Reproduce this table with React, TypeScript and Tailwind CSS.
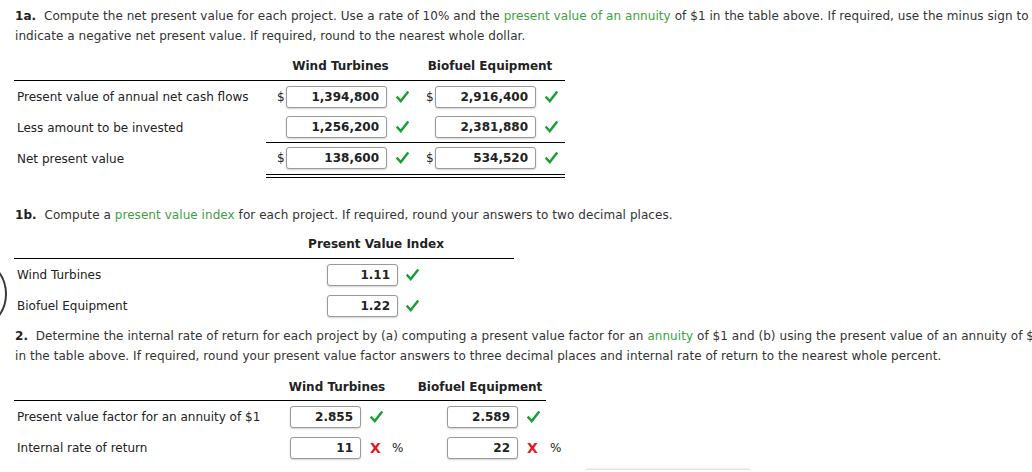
import React from "react";

const Check = () => (
  <svg width="13" height="12" viewBox="0 0 13 12" className="shrink-0">
    <path d="M1.5 6.5 L4.8 10 L11.5 1.5" fill="none" stroke="#1a9e35" strokeWidth="2.5" strokeLinecap="square" />
  </svg>
);

const Cross = () => (
  <span className="w-[12px] text-[14px] font-bold leading-none text-[#e8141b]">X</span>
);

const Box = ({ v, w }: { v: string; w: string }) => (
  <div
    className={`${w} h-[22px] shrink-0 rounded-[3px] border border-[#9a9a9a] bg-white pr-[7px] text-right text-[12px] font-bold leading-[20px] text-[#222] shadow-[0_1px_2px_rgba(0,0,0,0.18)]`}
  >
    {v}
  </div>
);

const Link = ({ children }: { children: React.ReactNode }) => (
  <span className="text-[#3f9f43]">{children}</span>
);

const MoneyCell = ({ dollar, v, w }: { dollar: boolean; v: string; w: string }) => (
  <div className={`${w} flex shrink-0 items-center`}>
    <span className="w-[20px] shrink-0 pl-[11px] text-[12px]">{dollar ? "$" : ""}</span>
    <Box v={v} w="w-[101px]" />
    <span className="ml-[9px]">
      <Check />
    </span>
  </div>
);

export default function App() {
  return (
    <div className="relative h-[472px] w-[1032px] overflow-hidden bg-white font-['DejaVu_Sans',Verdana,sans-serif] text-[12px] text-[#222]">
      {/* partial circle on the left edge */}
      <div className="absolute left-[-69px] top-[256px] h-[76px] w-[76px] rounded-full border-2 border-[#3a3a3a]" />
      {/* faint element at bottom */}
      <div className="absolute left-[585px] top-[469px] h-[10px] w-[166px] rounded-t-[3px] border-t border-[#e2e2e2] shadow-[0_-1px_2px_rgba(0,0,0,0.06)]" />

      <div className="pl-[15px] pt-[6px]">
        {/* 1a */}
        <div className="whitespace-nowrap text-[12px] leading-[20px] tracking-[0.06px] text-[#333]">
          <div>
            <b className="text-[#222]">1a.</b>&nbsp; Compute the net present value for each project. Use a rate of 10% and the{" "}
            <Link>present value of an annuity</Link> of $1 in the table above. If required, use the minus sign to
          </div>
          <div>indicate a negative net present value. If required, round to the nearest whole dollar.</div>
        </div>

        {/* table 1 */}
        <div className="ml-[-1px] mt-[6px] w-[551px]">
          <div className="flex h-[29px] items-center border-b border-black font-bold">
            <div className="w-[252px] shrink-0" />
            <div className="w-[149px] shrink-0 text-center">Wind Turbines</div>
            <div className="w-[150px] shrink-0 text-center">Biofuel Equipment</div>
          </div>
          <div className="flex h-[31px] items-center">
            <div className="w-[252px] shrink-0 pl-[3px]">Present value of annual net cash flows</div>
            <div className="flex h-full w-[299px] shrink-0 items-center">
              <MoneyCell dollar v="1,394,800" w="w-[149px]" />
              <MoneyCell dollar v="2,916,400" w="w-[150px]" />
            </div>
          </div>
          <div className="flex h-[31px] items-center">
            <div className="w-[252px] shrink-0 pl-[3px]">Less amount to be invested</div>
            <div className="flex h-full w-[299px] shrink-0 items-center border-b border-black">
              <MoneyCell dollar={false} v="1,256,200" w="w-[149px]" />
              <MoneyCell dollar={false} v="2,381,880" w="w-[150px]" />
            </div>
          </div>
          <div className="flex h-[35px] items-start">
            <div className="flex h-[31px] w-[252px] shrink-0 items-center pl-[3px]">Net present value</div>
            <div className="flex h-[35px] w-[299px] shrink-0 items-center border-b-4 border-double border-black pb-[1px]">
              <MoneyCell dollar v="138,600" w="w-[149px]" />
              <MoneyCell dollar v="534,520" w="w-[150px]" />
            </div>
          </div>
        </div>

        {/* 1b */}
        <div className="mt-[27px] whitespace-nowrap leading-[20px] tracking-[0.06px] text-[#333]">
          <b className="text-[#222]">1b.</b>&nbsp; Compute a <Link>present value index</Link> for each project. If required, round your answers to two decimal places.
        </div>
        <div className="ml-[-1px] mt-[5px] w-[500px]">
          <div className="flex h-[29px] items-center border-b border-black font-bold">
            <div className="w-[224px] shrink-0" />
            <div className="w-[276px] shrink-0 text-center">Present Value Index</div>
          </div>
          {[
            ["Wind Turbines", "1.11"],
            ["Biofuel Equipment", "1.22"],
          ].map(([l, v]) => (
            <div key={l} className="flex h-[31px] items-center">
              <div className="w-[313px] shrink-0 pl-[3px]">{l}</div>
              <Box v={v} w="w-[71px]" />
              <span className="ml-[8px]">
                <Check />
              </span>
            </div>
          ))}
        </div>

        {/* 2 */}
        <div className="mt-[5px] whitespace-nowrap leading-[20px] tracking-[0.06px] text-[#333]">
          <div>
            <b className="text-[#222]">2.</b>&nbsp; Determine the internal rate of return for each project by (a) computing a present value factor for an{" "}
            <Link>annuity</Link> of $1 and (b) using the present value of an annuity of $1
          </div>
          <div>
            in the table above. If required, round your present value factor answers to three decimal places and internal rate of return to the nearest whole percent.
          </div>
        </div>
        <div className="ml-[-1px] mt-[7px] w-[532px]">
          <div className="flex h-[28px] items-center border-b border-black font-bold">
            <div className="w-[266px] shrink-0" />
            <div className="w-[114px] shrink-0 text-center">Wind Turbines</div>
            <div className="w-[20px] shrink-0" />
            <div className="w-[132px] shrink-0 text-center">Biofuel Equipment</div>
          </div>
          <div className="flex h-[31px] items-center">
            <div className="w-[276px] shrink-0 pl-[3px]">Present value factor for an annuity of $1</div>
            <div className="flex w-[157px] shrink-0 items-center">
              <Box v="2.855" w="w-[71px]" />
              <span className="ml-[9px]">
                <Check />
              </span>
            </div>
            <div className="flex shrink-0 items-center">
              <Box v="2.589" w="w-[71px]" />
              <span className="ml-[9px]">
                <Check />
              </span>
            </div>
          </div>
          <div className="flex h-[31px] items-center">
            <div className="w-[276px] shrink-0 pl-[3px]">Internal rate of return</div>
            <div className="flex w-[157px] shrink-0 items-center">
              <Box v="11" w="w-[71px]" />
              <span className="ml-[9px] flex">
                <Cross />
              </span>
              <span className="ml-[10px] text-[12px]">%</span>
            </div>
            <div className="flex shrink-0 items-center">
              <Box v="22" w="w-[71px]" />
              <span className="ml-[9px] flex">
                <Cross />
              </span>
              <span className="ml-[11px] text-[12px]">%</span>
            </div>
          </div>
        </div>
      </div>
    </div>
  );
}
